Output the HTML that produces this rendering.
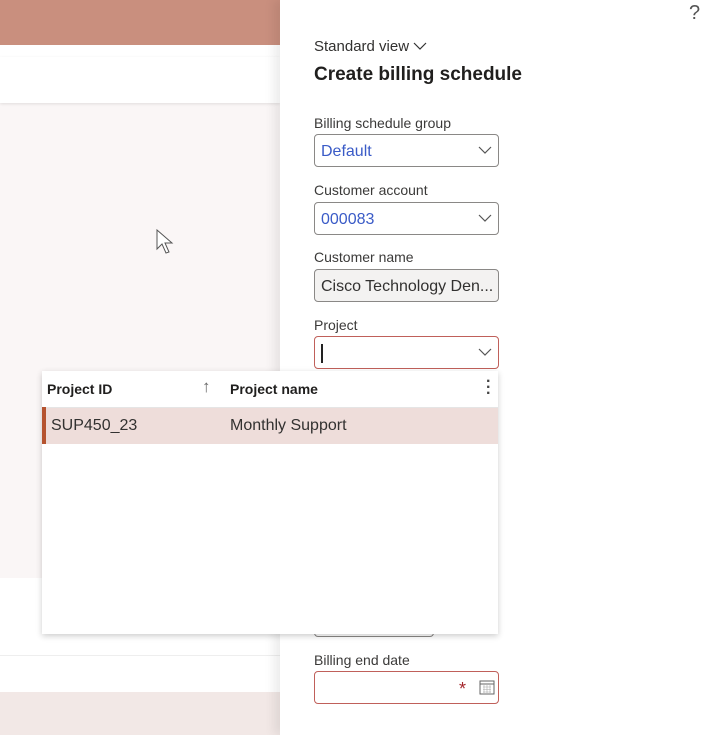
<!DOCTYPE html>
<html><head><meta charset="utf-8"><style>
*{box-sizing:border-box;margin:0;padding:0}
body{width:723px;height:735px;overflow:hidden;background:#fff;font-family:"Segoe UI","Liberation Sans",sans-serif;position:relative;color:#323130}
.a{position:absolute}
.lbl{position:absolute;left:314px;font-size:14px;color:#3b3a39}
.inp{position:absolute;left:314px;width:185px;height:33px;border:1px solid #8a8886;border-radius:4px;font-size:16px;padding:8px 6px 0;background:#fff}
.chev{position:absolute;right:6px;top:11px}
</style></head><body>
<div class="a" style="left:0;top:0;width:280px;height:735px;background:#faf6f6"></div>
<div class="a" style="left:0;top:0;width:280px;height:45px;background:#c98f7e"></div>
<div class="a" style="left:0;top:45px;width:280px;height:12px;background:#fff"></div>
<div class="a" style="left:0;top:57px;width:280px;height:46px;background:#fff;box-shadow:0 1px 3px rgba(0,0,0,.1)"></div>
<div class="a" style="left:0;top:578px;width:280px;height:77px;background:#fff"></div>
<div class="a" style="left:0;top:655px;width:280px;height:37px;background:#fff;border-top:1px solid #eee"></div>
<div class="a" style="left:0;top:692px;width:280px;height:43px;background:#f2e8e6"></div>
<svg class="a" style="left:156px;top:229px" width="18" height="26"><path d="M1 1 L1 20 L6 15 L10 24 L13 23 L9 14 L16 14 Z" fill="#fff" stroke="#555" stroke-width="1"/></svg>
<div class="a" style="left:280px;top:0;width:443px;height:735px;background:#fff;box-shadow:-6px 0 10px rgba(0,0,0,.08)"></div>
<div class="a" style="left:689px;top:2px;font-size:20px;color:#555;font-weight:300">?</div>
<div class="a" style="left:314px;top:38px;font-size:15px;color:#323130">Standard view <svg width="14" height="10"><path d="M1 2 L7 8 L13 2" fill="none" stroke="#333" stroke-width="1.2"/></svg></div>
<div class="a" style="left:314px;top:64px;font-size:19px;font-weight:600;color:#201f1e">Create billing schedule</div>
<div class="lbl" style="top:115px">Billing schedule group</div>
<div class="inp" style="top:134px;color:#3a5bc7">Default<svg class="chev" width="14" height="9"><path d="M1 1 L7 7 L13 1" fill="none" stroke="#555" stroke-width="1.2"/></svg></div>
<div class="lbl" style="top:182px">Customer account</div>
<div class="inp" style="top:202px;color:#3a5bc7">000083<svg class="chev" width="14" height="9"><path d="M1 1 L7 7 L13 1" fill="none" stroke="#555" stroke-width="1.2"/></svg></div>
<div class="lbl" style="top:249px">Customer name</div>
<div class="inp" style="top:269px;background:#f3f2f1;color:#323130;white-space:nowrap;overflow:hidden">Cisco Technology Den...</div>
<div class="lbl" style="top:317px">Project</div>
<div class="inp" style="top:336px;border-color:#c0605a"><div class="a" style="left:6px;top:7px;width:1.5px;height:19px;background:#222"></div><svg class="chev" width="14" height="9"><path d="M1 1 L7 7 L13 1" fill="none" stroke="#555" stroke-width="1.2"/></svg></div>
<div class="inp" style="top:604px;width:120px;height:33px"></div>
<div class="lbl" style="top:652px">Billing end date</div>
<div class="inp" style="top:671px;border-color:#c0605a"><span class="a" style="left:144px;top:7px;color:#a4262c;font-size:18px">*</span><svg class="a" style="left:164px;top:7px" width="16" height="16"><rect x="1" y="2" width="14" height="13" fill="none" stroke="#666"/><line x1="1" y1="5" x2="15" y2="5" stroke="#666"/><path d="M4 8h8M4 10.5h8M4 13h8M5 6v8M8 6v8M11 6v8" stroke="#aaa" stroke-width=".6"/></svg></div>
<div class="a" style="left:42px;top:371px;width:456px;height:263px;background:#fff;box-shadow:0 2px 6px rgba(0,0,0,.2)">
<div class="a" style="left:5px;top:10px;font-size:14px;font-weight:600;color:#201f1e">Project ID</div>
<div class="a" style="left:160px;top:6px;font-size:17px;color:#666">↑</div>
<div class="a" style="left:188px;top:10px;font-size:14px;font-weight:600;color:#201f1e">Project name</div>
<div class="a" style="left:444px;top:8px;font-size:16px;font-weight:bold;color:#444;line-height:6px">·<br>·<br>·</div>
<div class="a" style="left:0;top:36px;width:456px;height:37px;background:#eeddda;border-top:1px solid #e5e5e5"></div>
<div class="a" style="left:0;top:36px;width:4px;height:37px;background:#b5532f"></div>
<div class="a" style="left:9px;top:46px;font-size:16px;color:#323130">SUP450_23</div>
<div class="a" style="left:188px;top:46px;font-size:16px;color:#323130">Monthly Support</div>
</div>
</body></html>
